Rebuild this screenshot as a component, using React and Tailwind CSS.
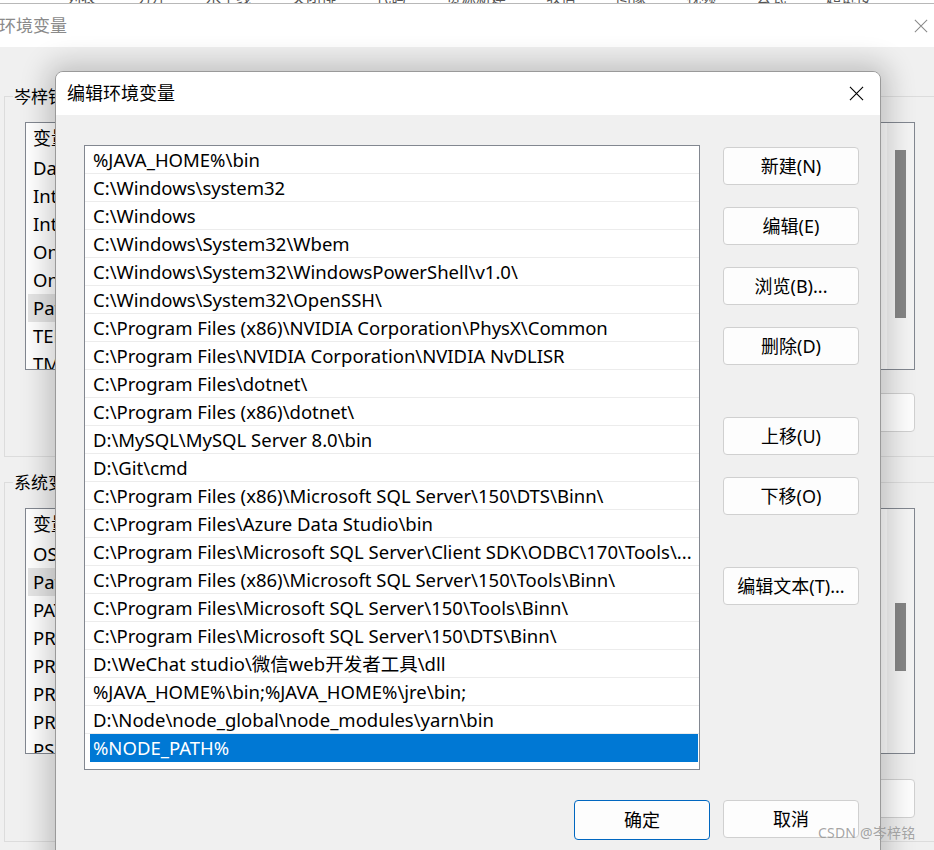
import React from 'react';

const paths = [
  '%JAVA_HOME%\\bin',
  'C:\\Windows\\system32',
  'C:\\Windows',
  'C:\\Windows\\System32\\Wbem',
  'C:\\Windows\\System32\\WindowsPowerShell\\v1.0\\',
  'C:\\Windows\\System32\\OpenSSH\\',
  'C:\\Program Files (x86)\\NVIDIA Corporation\\PhysX\\Common',
  'C:\\Program Files\\NVIDIA Corporation\\NVIDIA NvDLISR',
  'C:\\Program Files\\dotnet\\',
  'C:\\Program Files (x86)\\dotnet\\',
  'D:\\MySQL\\MySQL Server 8.0\\bin',
  'D:\\Git\\cmd',
  'C:\\Program Files (x86)\\Microsoft SQL Server\\150\\DTS\\Binn\\',
  'C:\\Program Files\\Azure Data Studio\\bin',
  'C:\\Program Files\\Microsoft SQL Server\\Client SDK\\ODBC\\170\\Tools\\...',
  'C:\\Program Files (x86)\\Microsoft SQL Server\\150\\Tools\\Binn\\',
  'C:\\Program Files\\Microsoft SQL Server\\150\\Tools\\Binn\\',
  'C:\\Program Files\\Microsoft SQL Server\\150\\DTS\\Binn\\',
  'D:\\WeChat studio\\微信web开发者工具\\dll',
  '%JAVA_HOME%\\bin;%JAVA_HOME%\\jre\\bin;',
  'D:\\Node\\node_global\\node_modules\\yarn\\bin',
  '%NODE_PATH%',
];

const userVars = ['Data', 'IntelliJ IDEA', 'IntelliJ IDEA Community', 'OneDrive', 'OneDriveConsumer', 'Path', 'TEMP', 'TMP'];
const sysVars = ['OS', 'Path', 'PATHEXT', 'PROCESSOR_ARCHITECTURE', 'PROCESSOR_IDENTIFIER', 'PROCESSOR_LEVEL', 'PROCESSOR_REVISION', 'PSModulePath'];
const menu = ['列表', '另开', '水平线', '关闭排', '代码', '资源新建', '收信', '图像', '视频', '公式', '超链接'];

const CloseIcon = ({ size = 16, color = '#000' }) => (
  <svg width={size} height={size} viewBox="0 0 16 16">
    <path d="M1 1L15 15M15 1L1 15" stroke={color} strokeWidth="1.2" />
  </svg>
);

const Btn = ({ children, primary }) => (
  <button
    className={
      primary
        ? 'w-[136px] h-[40px] rounded-[4px] border border-[#0067c0] bg-[#fdfdfd] text-[18px] text-black'
        : 'w-[136px] h-[38px] rounded-[4px] border border-[#d0d0d0] bg-[#fdfdfd] text-[18px] text-black'
    }
  >
    {children}
  </button>
);

const VarList = ({ items, height, thumb }) => (
  <div className={`w-[890px] ${height} ml-[20px] bg-white border border-[#828790] flex overflow-hidden`}>
    <div className="flex-1">
      <div className="h-[31px] flex items-center pl-[7px] text-[18px]">变量</div>
      {items.map((v) => (
        <div key={v} className="h-[28px] flex items-center pl-[2px] text-[18.5px]">
          <span className={v === 'Path' ? 'bg-[#e5e5e5] pl-[5px] pr-[4px] h-full flex items-center' : 'pl-[5px]'}>{v}</span>
        </div>
      ))}
    </div>
    <div className="w-[27px] bg-[#f4f4f4] flex flex-col items-center">
      {thumb}
    </div>
  </div>
);

export default function App() {
  return (
    <div className="relative w-[934px] h-[850px] overflow-hidden bg-[#f0f0f0] text-black font-['Noto_Sans','Noto_Sans_CJK_SC',sans-serif]">
      {/* top strip of the editor behind */}
      <div className="h-[4px] overflow-hidden bg-white border-b border-[#b8b8b8]">
        <div className="flex gap-[40px] pl-[66px] -mt-[14px] text-[15px] text-[#555]">
          {menu.map((m) => (
            <span key={m}>{m}</span>
          ))}
        </div>
      </div>

      {/* background window title */}
      <div className="h-[43px] bg-white flex items-center justify-between pr-[6px]">
        <span className="text-[17px] text-[#8a8a8a] -ml-[1px]">环境变量</span>
        <CloseIcon size={14} color="#8a8a8a" />
      </div>

      {/* background window body */}
      <div className="w-[960px] pl-[4px] pt-[49px]">
        <div className="relative border border-[#dcdcdc] h-[361px] pt-[25px]">
          <span className="absolute -top-[13px] left-[8px] px-[1px] bg-[#f0f0f0] text-[17px]">岑梓铭的用户变量</span>
          <VarList items={userVars} height="h-[248px]" thumb={<div className="mt-[27px] w-[11px] h-[168px] bg-[#858585]" />} />
          <div className="flex gap-[10px] ml-[628px] mt-[23px]">
            <div className="w-[136px] h-[39px] rounded-[4px] border border-[#d0d0d0] bg-[#fdfdfd]" />
            <div className="w-[136px] h-[39px] rounded-[4px] border border-[#d0d0d0] bg-[#fdfdfd]" />
          </div>
        </div>
        <div className="relative border border-[#dcdcdc] h-[360px] mt-[25px] pt-[25px]">
          <span className="absolute -top-[13px] left-[8px] px-[1px] bg-[#f0f0f0] text-[17px]">系统变量</span>
          <VarList items={sysVars} height="h-[246px]" thumb={<div className="mt-[94px] w-[11px] h-[68px] bg-[#858585]" />} />
          <div className="flex gap-[10px] ml-[628px] mt-[25px]">
            <div className="w-[136px] h-[39px] rounded-[4px] border border-[#d0d0d0] bg-[#fdfdfd]" />
            <div className="w-[136px] h-[39px] rounded-[4px] border border-[#d0d0d0] bg-[#fdfdfd]" />
          </div>
        </div>
      </div>

      {/* dialog */}
      <div className="absolute left-[55px] top-[71px] w-[826px] h-[800px] rounded-t-[8px] border border-[#9a9a9a] bg-[#f0f0f0] shadow-[0_0_28px_8px_rgba(0,0,0,0.2)] overflow-hidden">
        <div className="h-[43px] bg-white flex items-center justify-between pl-[11px] pr-[16px]">
          <span className="text-[18px]">编辑环境变量</span>
          <CloseIcon size={15} />
        </div>
        <div className="pl-[28px] pr-[21px] pt-[30px]">
          <div className="flex gap-[23px]">
            <div className="w-[616px] h-[625px] bg-white border border-[#828790]">
              {paths.map((p, i) => {
                const sel = i === paths.length - 1;
                return (
                  <div key={i} className={sel ? 'h-[28px] pl-[5px] pr-[1px]' : 'h-[28px] pl-[5px] pr-[1px] border-b border-[#ececec]'}>
                    <div className={sel ? 'h-full flex items-center pl-[3px] bg-[#0078d4] text-white text-[18.5px] whitespace-nowrap' : 'h-full flex items-center pl-[3px] text-[18.5px] whitespace-nowrap'}>
                      {p}
                    </div>
                  </div>
                );
              })}
            </div>
            <div className="flex flex-col pt-[2px]">
              <div className="flex flex-col gap-[22px]">
                <Btn>新建(N)</Btn>
                <Btn>编辑(E)</Btn>
                <Btn>浏览(B)...</Btn>
                <Btn>删除(D)</Btn>
              </div>
              <div className="flex flex-col gap-[22px] mt-[52px]">
                <Btn>上移(U)</Btn>
                <Btn>下移(O)</Btn>
              </div>
              <div className="mt-[52px]">
                <Btn>编辑文本(T)...</Btn>
              </div>
            </div>
          </div>
          <div className="flex justify-end gap-[13px] mt-[30px]">
            <Btn primary>确定</Btn>
            <Btn>取消</Btn>
          </div>
        </div>
      </div>

      {/* watermark */}
      <div className="absolute left-[818px] top-[822px] text-[14px] text-[#9a9a9a]/90 tracking-[0.2px]">CSDN @岑梓铭</div>
    </div>
  );
}
